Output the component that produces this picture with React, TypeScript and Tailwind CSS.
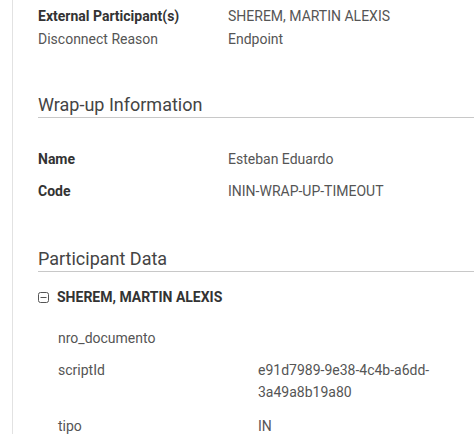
import React from 'react';

const font = { fontFamily: 'Roboto, "Noto Sans", sans-serif' };

const Row = ({ label, value, bold = true, tall = false }: { label: string; value: string; bold?: boolean; tall?: boolean }) => (
  <div className={`flex ${tall ? 'h-[32px] items-center' : 'h-[23px] items-center'}`}>
    <div className={`w-[190px] text-[14px] ${bold ? 'font-bold text-[#333]' : 'text-[#555]'}`}>{label}</div>
    <div className="text-[14px] text-[#555]">{value}</div>
  </div>
);

const Heading = ({ children }: { children: React.ReactNode }) => (
  <div className="border-b border-[#c8c8c8] text-[18px] leading-[24px] text-[#444]">{children}</div>
);

export default function App() {
  return (
    <div className="w-[474px] h-[434px] overflow-hidden bg-white" style={font}>
      <div className="ml-[12px] border-l border-[#e2e2e2] pl-[25px] pt-[5px] min-h-[434px]">
        <Row label="External Participant(s)" value="SHEREM, MARTIN ALEXIS" />
        <Row label="Disconnect Reason" value="Endpoint" bold={false} />

        <div className="mt-[42px]">
          <Heading>Wrap-up Information</Heading>
        </div>

        <div className="mt-[25px]">
          <Row label="Name" value="Esteban Eduardo" tall />
          <Row label="Code" value="ININ-WRAP-UP-TIMEOUT" tall />
        </div>

        <div className="mt-[40px]">
          <Heading>Participant Data</Heading>
        </div>

        <div className="mt-[13px] flex items-center h-[24px]">
          <svg width="11" height="11" viewBox="0 0 11 11" className="mr-[8px]">
            <rect x="0.5" y="0.5" width="10" height="10" rx="2" fill="none" stroke="#555" strokeWidth="1" />
            <line x1="2.5" y1="5.5" x2="8.5" y2="5.5" stroke="#555" strokeWidth="1" />
          </svg>
          <span className="text-[14px] font-bold text-[#333]">SHEREM, MARTIN ALEXIS</span>
        </div>

        <div className="pl-[20px] mt-[13px] text-[14px] text-[#555]">
          <div className="flex h-[32px] items-center">
            <div className="w-[200px]">nro_documento</div>
            <div></div>
          </div>
          <div className="flex pt-[5px] pb-[7px]">
            <div className="w-[200px] leading-[22px]">scriptId</div>
            <div className="w-[180px] leading-[22px]">e91d7989-9e38-4c4b-a6dd-3a49a8b19a80</div>
          </div>
          <div className="flex h-[32px] items-center">
            <div className="w-[200px]">tipo</div>
            <div>IN</div>
          </div>
        </div>
      </div>
    </div>
  );
}
